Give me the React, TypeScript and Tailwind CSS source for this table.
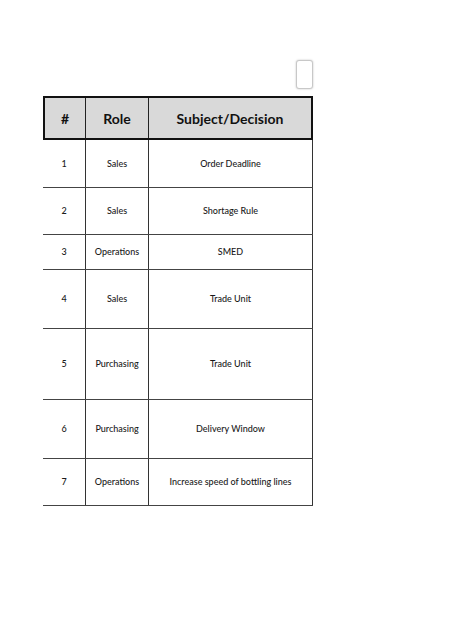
const rows = [
  { n: '1', role: 'Sales', subject: 'Order Deadline', h: 'h-[48px]' },
  { n: '2', role: 'Sales', subject: 'Shortage Rule', h: 'h-[47px]' },
  { n: '3', role: 'Operations', subject: 'SMED', h: 'h-[35px]' },
  { n: '4', role: 'Sales', subject: 'Trade Unit', h: 'h-[59px]' },
  { n: '5', role: 'Purchasing', subject: 'Trade Unit', h: 'h-[71px]' },
  { n: '6', role: 'Purchasing', subject: 'Delivery Window', h: 'h-[59px]' },
  { n: '7', role: 'Operations', subject: 'Increase speed of bottling lines', h: 'h-[47px]' },
];

export default function App() {
  return (
    <div className="w-[474px] h-[632px] bg-white font-['Lato','Open_Sans',sans-serif] text-[#1a1a1a]">
      <div className="w-[270px] ml-[43px] pt-[60px]">
        {/* little box above the table */}
        <div className="flex justify-end">
          <div className="w-[17px] h-[29px] rounded-[3px] border border-[#c8c8c8] shadow-[0_0_2px_rgba(0,0,0,0.25)] bg-white" />
        </div>

        <div className="mt-[7px] flex h-[44px] border-2 border-[#111] bg-[#d9d9d9] text-[14px] font-bold text-[#111]">
          <div className="w-[41px] flex items-center justify-center border-r border-[#222]">#</div>
          <div className="w-[63px] flex items-center justify-center border-r border-[#222]">Role</div>
          <div className="flex-1 flex items-center justify-center">Subject/Decision</div>
        </div>

        {rows.map((r) => (
          <div key={r.n} className={`flex ${r.h} border-b border-[#444] text-[9px] font-medium`}>
            <div className="w-[43px] flex items-center justify-center border-r border-[#333]">{r.n}</div>
            <div className="w-[63px] flex items-center justify-center border-r border-[#333]">{r.role}</div>
            <div className="flex-1 flex items-center justify-center border-r border-[#333]">{r.subject}</div>
          </div>
        ))}
      </div>
    </div>
  );
}
